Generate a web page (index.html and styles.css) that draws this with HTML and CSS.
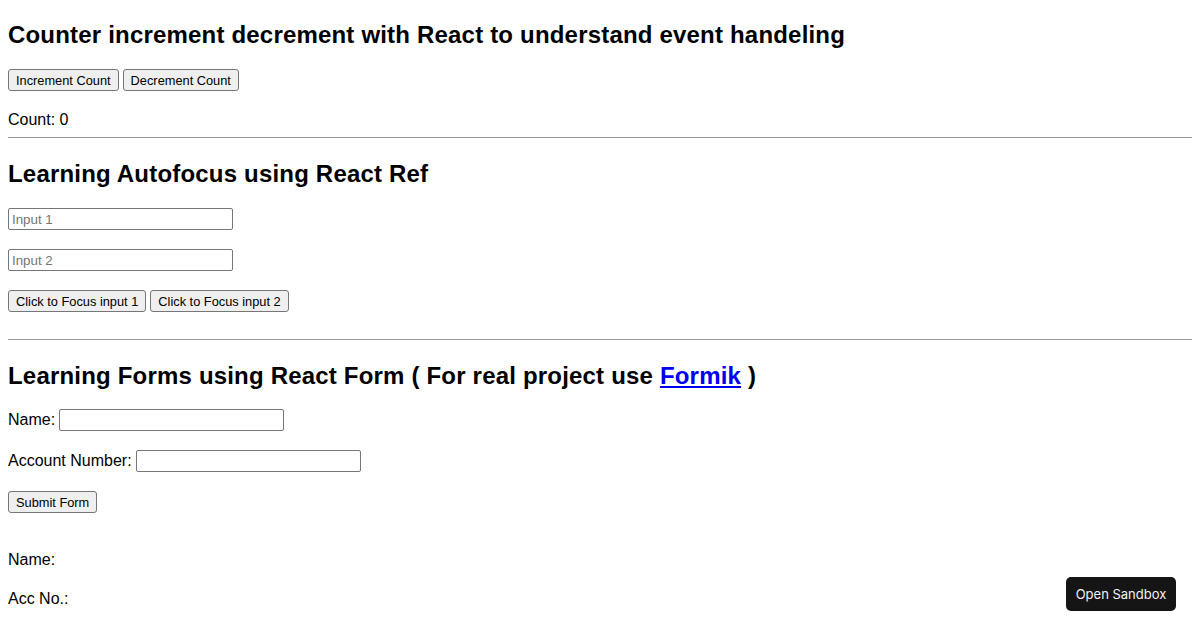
FILE: index.html
```html
<!DOCTYPE html>
<html lang="en">
<head>
    <meta charset="UTF-8">
    <meta name="viewport" content="width=device-width, initial-scale=1.0">
    <title>React Learning</title>
    <link rel="stylesheet" href="styles.css">
</head>
<body>

    <div class="App">
        <h2 class="first">Counter increment decrement with React to understand event handeling</h2>
        <div class="btn-row top-row">
            <button>Increment Count</button>
            <button>Decrement Count</button>
        </div>
        <p class="count">Count: 0</p>
        <hr class="short">

        <h2>Learning Autofocus using React Ref</h2>
        <div class="field top-row"><input type="text" placeholder="Input 1"></div>
        <div class="field"><input type="text" placeholder="Input 2"></div>
        <div class="field btn-row">
            <button>Click to Focus input 1</button>
            <button>Click to Focus input 2</button>
        </div>
        <hr class="long">

        <h2>Learning Forms using React Form ( For real project use <a href="#">Formik</a> )</h2>
        <form class="form">
            <label class="field">Name: <input type="text"></label>
            <label class="field">Account Number: <input type="text"></label>
            <div class="field"><button type="submit">Submit Form</button></div>
        </form>
        <p class="result first-result">Name: </p>
        <p class="result">Acc No.: </p>
    </div>

    <button class="sandbox-btn">Open Sandbox</button>

</body>
</html>
```

FILE: styles.css
```css
body {
    font-family: 'Liberation Sans', Arial, sans-serif;
    font-size: 16px;
    margin: 0;
    padding: 0 8px;
    color: #000;
}

.App {
    display: flex;
    flex-direction: column;
    align-items: flex-start;
    padding-top: 21px;
}

h2 {
    font-size: 24px;
    line-height: 28px;
    letter-spacing: 0.19px;
    margin: 22px 0 0;
}

h2.first {
    margin-top: 0;
}

a {
    color: #0000ee;
}

button {
    font-family: 'Liberation Sans', Arial, sans-serif;
    font-size: 12.8px;
    height: 22px;
    padding: 0 7px;
    background: #efefef;
    border: 1px solid #767676;
    border-radius: 3px;
    color: #000;
}

input {
    font-family: 'Liberation Sans', Arial, sans-serif;
    font-size: 13.33px;
    width: 225px;
    height: 22px;
    box-sizing: border-box;
    padding: 1px 3px;
    border: 1px solid #767676;
    border-radius: 2px;
}

input::placeholder {
    color: #757575;
}

.btn-row {
    display: flex;
    gap: 4px;
}

.field {
    display: flex;
    align-items: center;
    gap: 4px;
    height: 22px;
    margin-top: 19px;
}

.top-row {
    margin-top: 20px;
}

.form {
    display: flex;
    flex-direction: column;
}

.count,
.result {
    line-height: 18px;
    margin: 19px 0 0;
}

.count {
    margin-top: 20px;
}

.first-result {
    margin-top: 38px;
}

.result + .result {
    margin-top: 21px;
}

hr {
    align-self: stretch;
    border: none;
    border-top: 1px solid #9a9a9a;
    margin: 8px 0 0;
}

hr.long {
    margin-top: 27px;
}

.sandbox-btn {
    position: fixed;
    right: 24px;
    bottom: 19px;
    width: 110px;
    height: 34px;
    padding: 0;
    background: #151515;
    color: #f2f2f2;
    border: none;
    border-radius: 5px;
    font-family: Inter, 'Liberation Sans', sans-serif;
    font-size: 13px;
}
```
